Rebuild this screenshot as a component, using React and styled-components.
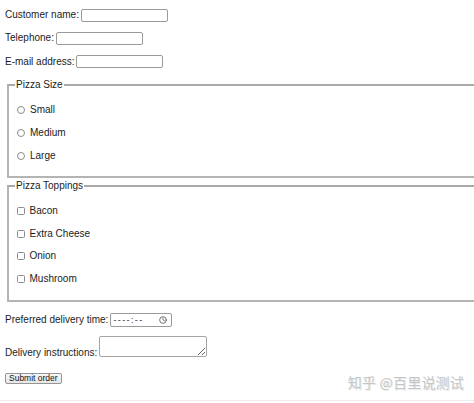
import React from 'react'
import styled, { createGlobalStyle } from 'styled-components'
import { Clock } from 'lucide-react'

const GlobalStyle = createGlobalStyle`
  html, body {
    margin: 0;
    padding: 0;
    background: #fff;
  }
  body {
    font-family: "Liberation Sans", Arial, sans-serif;
    color: #1c1c1c;
    overflow: hidden;
  }
`

const App = () => {
  return (
    <Page>
      <GlobalStyle />
      <Form onSubmit={(e) => e.preventDefault()}>
        <Row $top={8}>
          <Label>Customer name:</Label>
          <TextInput />
        </Row>
        <Row $top={9.3}>
          <Label>Telephone:</Label>
          <TextInput type="tel" />
        </Row>
        <Row $top={9.4}>
          <Label>E-mail address:</Label>
          <TextInput type="email" />
        </Row>

        <Group $top={10.3} $bottom={13}>
          <Legend>Pizza Size</Legend>
          <Option $top={11.7}><Radio name="size" />Small</Option>
          <Option $top={9}><Radio name="size" />Medium</Option>
          <Option $top={9}><Radio name="size" />Large</Option>
        </Group>

        <Group $top={2} $bottom={14.3}>
          <Legend>Pizza Toppings</Legend>
          <Option $top={12.3}><Check />Bacon</Option>
          <Option $top={8.6}><Check />Extra Cheese</Option>
          <Option $top={8.6}><Check />Onion</Option>
          <Option $top={8.6}><Check />Mushroom</Option>
        </Group>

        <Row $top={11}>
          <Label>Preferred delivery time:</Label>
          <TimeBox>
            <TimeText>----:--</TimeText>
            <Clock size={8} strokeWidth={2} color="#333" />
          </TimeBox>
        </Row>

        <BottomRow $top={8.7}>
          <LowLabel>Delivery instructions:</LowLabel>
          <TextArea />
        </BottomRow>

        <SubmitButton type="submit">Submit order</SubmitButton>
      </Form>
      <Watermark>知乎 @百里说测试</Watermark>
    </Page>
  )
}

export default App

const Page = styled.div`
  position: relative;
  height: 401px;
  box-sizing: border-box;
  padding-left: 5px;
  border-bottom: 1px solid #ececec;
  overflow: hidden;
`
const Form = styled.form`
  display: flex;
  flex-direction: column;
  align-items: flex-start;
`
const Row = styled.div`
  display: flex;
  align-items: center;
  gap: 2px;
  height: 14px;
  margin-top: ${(p) => p.$top}px;
`
const Label = styled.span`
  font-size: 10px;
  line-height: 12px;
  white-space: nowrap;
`
const TextInput = styled.input`
  box-sizing: border-box;
  width: 87px;
  height: 13px;
  margin: 0;
  padding: 0 2px;
  border: 1px solid #9a9a9a;
  border-radius: 2px;
  background: #fff;
  font-size: 9px;
  outline: none;
`
const Group = styled.fieldset`
  align-self: stretch;
  margin: ${(p) => p.$top}px -12px 0 2px;
  padding: 0 0 ${(p) => p.$bottom}px 6px;
  border: 2px solid #b4b4b4;
  border-top-color: #a9a9a9;
  min-width: 0;
`
const Legend = styled.legend`
  padding: 0 1px;
  font-size: 10px;
  line-height: 12px;
`
const Option = styled.label`
  display: flex;
  align-items: center;
  height: 14px;
  margin-top: ${(p) => p.$top}px;
  padding-left: 2px;
  font-size: 10px;
  line-height: 12px;
`
const Radio = styled.input.attrs({ type: 'radio' })`
  appearance: none;
  box-sizing: border-box;
  width: 8px;
  height: 8px;
  margin: 0 5px 0 0;
  border: 1px solid #8c8c8c;
  border-radius: 50%;
  background: #fff;
`
const Check = styled.input.attrs({ type: 'checkbox' })`
  appearance: none;
  box-sizing: border-box;
  width: 8px;
  height: 8px;
  margin: 0 4.5px 0 0;
  border: 1px solid #8c8c8c;
  border-radius: 1.5px;
  background: #fff;
`
const TimeBox = styled.div`
  box-sizing: border-box;
  display: flex;
  align-items: center;
  justify-content: space-between;
  width: 62px;
  height: 14px;
  padding: 0 4px 0 2px;
  border: 1px solid #9a9a9a;
  border-radius: 2px;
`
const TimeText = styled.span`
  font-size: 9px;
  letter-spacing: 1.4px;
  color: #333;
`
const BottomRow = styled.div`
  display: flex;
  align-items: flex-end;
  gap: 2px;
  margin-top: ${(p) => p.$top}px;
`
const LowLabel = styled(Label)`
  margin-bottom: -2px;
`
const TextArea = styled.textarea`
  box-sizing: border-box;
  width: 108px;
  height: 21px;
  margin: 0;
  padding: 1px 2px;
  border: 1px solid #a5a5a5;
  border-radius: 2px;
  font-size: 9px;
  outline: none;
`
const SubmitButton = styled.button`
  box-sizing: border-box;
  height: 11px;
  margin-top: 16px;
  padding: 0 3px;
  border: 1px solid #959595;
  border-radius: 2px;
  background: linear-gradient(#f7f7f7, #e6e6e6);
  font-family: "Liberation Sans", Arial, sans-serif;
  font-size: 8.5px;
  line-height: 9px;
  color: #111;
`
const Watermark = styled.div`
  position: absolute;
  right: 10px;
  top: 373px;
  font-family: "Noto Sans CJK SC", "Liberation Sans", sans-serif;
  font-size: 14px;
  line-height: 18px;
  color: #c6c6c6;
  text-shadow: 1px 1px 0 #ececec;
  letter-spacing: 0.2px;
`
